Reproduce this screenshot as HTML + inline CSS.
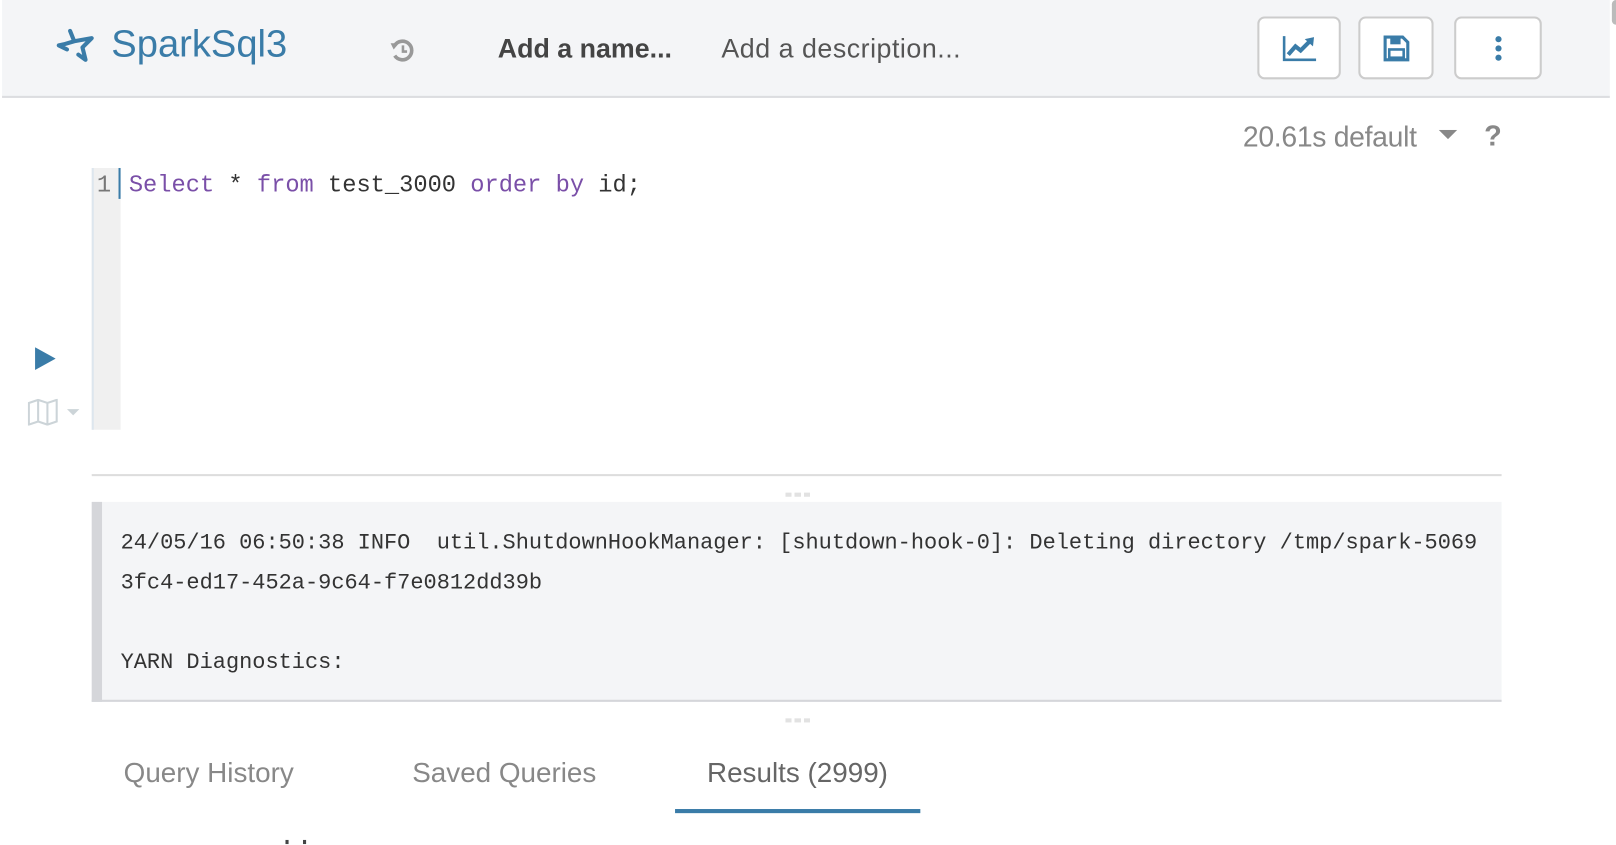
<!DOCTYPE html>
<html><head><meta charset="utf-8"><style>
*{margin:0;padding:0;box-sizing:border-box}
body{width:1616px;height:844px;overflow:hidden;background:#fff;font-family:"Liberation Sans",sans-serif;position:relative}
#w{position:absolute;left:0;top:0;width:1568px;height:820px;transform:scale(1.0306);transform-origin:0 0}
.a{position:absolute;white-space:nowrap}
.hdr{position:absolute;left:2px;top:0;width:1560px;height:95px;background:#f4f5f7;border-bottom:2px solid #dcdde0}
.btn{position:absolute;top:16px;height:61px;background:#fff;border:2px solid #ccc;border-radius:7px;display:flex;align-items:center;justify-content:center}
.mono{font-family:"Liberation Mono",monospace}
</style></head><body><div id="w">
<div class="hdr"></div>
<svg class="a" style="left:54px;top:27px" width="40" height="34" viewBox="0 0 40 34"><path d="M14 3 L18 13 L35 10 L26 19 L29 31 L22 26 M18 13 L8 16 L3 17 L11 21" fill="none" stroke="#3a7ca8" stroke-width="4" stroke-linejoin="round" stroke-linecap="round"/></svg>
<div class="a" style="left:108px;top:22px;font-size:37px;color:#3a7ca8">SparkSql3</div>
<svg class="a" style="left:378px;top:36px" width="26" height="26" viewBox="0 0 26 26"><path d="M5 8 A9 9 0 1 1 5 18" fill="none" stroke="#999" stroke-width="3.5"/><path d="M1 6 L9 6 L4 12Z" fill="#999"/><path d="M13 8 V14 H17" fill="none" stroke="#999" stroke-width="2.5"/></svg>
<div class="a" style="left:483px;top:32px;font-size:26px;font-weight:bold;color:#444">Add a name...</div>
<div class="a" style="left:700px;top:32px;font-size:26px;color:#555;letter-spacing:0.5px">Add a description...</div>
<div class="btn" style="left:1220px;width:81px"><svg width="34" height="26" viewBox="0 0 34 26"><path d="M2 1 V24 H33" fill="none" stroke="#3a7ca8" stroke-width="2.5"/><path d="M6 19 L13 11 L18 15 L27 6" fill="none" stroke="#3a7ca8" stroke-width="4"/><path d="M22 4 L31 2 L30 11Z" fill="#3a7ca8"/></svg></div>
<div class="btn" style="left:1318px;width:73px"><svg width="26" height="26" viewBox="0 0 26 26"><path d="M2 2 H19 L24 7 V24 H2Z" fill="none" stroke="#3a7ca8" stroke-width="3"/><rect x="7" y="2" width="10" height="7" fill="#3a7ca8"/><rect x="6" y="14" width="14" height="8" fill="none" stroke="#3a7ca8" stroke-width="2.5"/></svg></div>
<div class="btn" style="left:1411px;width:85px"><svg width="8" height="26" viewBox="0 0 8 26"><circle cx="4" cy="4" r="3" fill="#3a7ca8"/><circle cx="4" cy="13" r="3" fill="#3a7ca8"/><circle cx="4" cy="22" r="3" fill="#3a7ca8"/></svg></div>
<div class="a" style="left:1564px;top:0;width:8px;height:24px;background:#bbb;border-radius:4px"></div>
<div class="a" style="left:1206px;top:117px;font-size:27.5px;color:#888;letter-spacing:-0.3px">20.61s default</div>
<svg class="a" style="left:1396px;top:126px" width="18" height="10"><path d="M0 0 H18 L9 9Z" fill="#888"/></svg>
<div class="a" style="left:1440px;top:116px;font-size:28px;font-weight:bold;color:#888">?</div>
<div class="a" style="left:89px;top:163px;width:28px;height:254px;background:#f0f0f0;border-left:2px solid #dde6ee"></div>
<div class="a" style="left:115px;top:163px;width:2px;height:30px;background:#3a7ca8"></div>
<div class="a mono" style="left:94px;top:167px;font-size:23px;color:#777">1</div>
<div class="a mono" style="left:125px;top:167px;font-size:23px;color:#333"><span style="color:#7a4fa8">Select</span> * <span style="color:#7a4fa8">from</span> test_3000 <span style="color:#7a4fa8">order by</span> id;</div>
<svg class="a" style="left:34px;top:337px" width="20" height="22"><path d="M0 0 L20 11 L0 22Z" fill="#3a7ca8"/></svg>
<svg class="a" style="left:27px;top:387px" width="54" height="26" viewBox="0 0 54 26"><path d="M1 4 L10 1 L19 4 L28 1 V22 L19 25 L10 22 L1 25Z M10 1 V22 M19 4 V25" fill="none" stroke="#ccd4d8" stroke-width="2"/><path d="M38 10 H50 L44 16Z" fill="#ccd4d8"/></svg>
<div class="a" style="left:89px;top:460px;width:1368px;height:2px;background:#ddd"></div>
<div class="a" style="left:762px;top:478px;width:24px;height:4px;background:repeating-linear-gradient(90deg,#e2e2e2 0 6px,transparent 6px 9px)"></div>
<div class="a" style="left:89px;top:487px;width:1368px;height:194px;background:#f4f5f7;border-left:10px solid #d5d6da;border-bottom:2px solid #d5d6da"></div>
<div class="a mono" style="left:117px;top:508px;font-size:21.3px;color:#333;line-height:38.5px">24/05/16 06:50:38 INFO&nbsp; util.ShutdownHookManager: [shutdown-hook-0]: Deleting directory /tmp/spark-5069<br>3fc4-ed17-452a-9c64-f7e0812dd39b<br><br>YARN Diagnostics:</div>
<div class="a" style="left:762px;top:697px;width:24px;height:4px;background:repeating-linear-gradient(90deg,#e2e2e2 0 6px,transparent 6px 9px)"></div>
<div class="a" style="left:120px;top:735px;font-size:27px;color:#888">Query History</div>
<div class="a" style="left:400px;top:735px;font-size:27px;color:#888">Saved Queries</div>
<div class="a" style="left:686px;top:735px;font-size:27px;color:#666">Results (2999)</div>
<div class="a" style="left:655px;top:785px;width:238px;height:4px;background:#3a7ca8"></div>
<div class="a" style="left:277px;top:815px;width:3px;height:4px;background:#444"></div>
<div class="a" style="left:294px;top:815px;width:3px;height:4px;background:#444"></div>
</div></body></html>
